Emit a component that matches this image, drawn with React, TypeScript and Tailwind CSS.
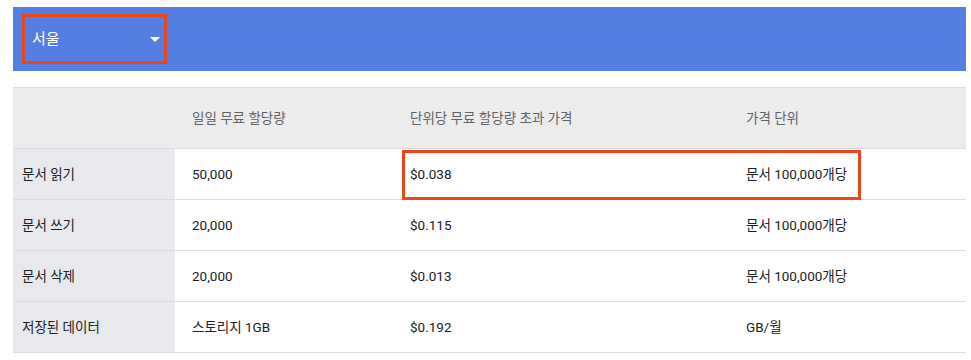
import React from "react";

const rows = [
  { name: "문서 읽기", free: "50,000", price: "$0.038", unit: "문서 100,000개당" },
  { name: "문서 쓰기", free: "20,000", price: "$0.115", unit: "문서 100,000개당" },
  { name: "문서 삭제", free: "20,000", price: "$0.013", unit: "문서 100,000개당" },
  { name: "저장된 데이터", free: "스토리지 1GB", price: "$0.192", unit: "GB/월" },
];

const App = () => {
  return (
    <div
      className="w-[971px] h-[360px] bg-white pt-[7px] pl-[13px] pr-[5px]"
      style={{ fontFamily: 'Roboto, "Noto Sans CJK KR", sans-serif' }}
    >
      {/* region picker bar */}
      <div className="h-[64px] bg-[#557ee3] pt-[7px] pl-[9px]">
        <div className="w-[145px] h-[50px] border-[3px] border-[#ea461e] flex items-center justify-between pl-[7px] pr-[4px]">
          <span className="text-white text-[15px]">서울</span>
          <span className="w-0 h-0 border-l-[5px] border-r-[5px] border-t-[5px] border-l-transparent border-r-transparent border-t-white" />
        </div>
      </div>

      {/* pricing table */}
      <div className="relative mt-[16px] border-t border-[#dcdcdc] text-[13.5px] text-[#202124]">
        <div className="flex h-[61px] bg-[#ececec] border-b border-[#dcdcdc] text-[#5f6368] items-center">
          <div className="w-[162px]" />
          <div className="w-[219px] pl-[17px]">일일 무료 할당량</div>
          <div className="w-[336px] pl-[16px]">단위당 무료 할당량 초과 가격</div>
          <div className="flex-1 pl-[16px]">가격 단위</div>
        </div>
        {rows.map((r) => (
          <div key={r.name} className="flex h-[51px] border-b border-[#dcdcdc]">
            <div className="w-[162px] bg-[#e8e9ed] pl-[9px] flex items-center">{r.name}</div>
            <div className="w-[219px] pl-[17px] flex items-center">{r.free}</div>
            <div className="w-[336px] pl-[16px] flex items-center">{r.price}</div>
            <div className="flex-1 pl-[16px] flex items-center">{r.unit}</div>
          </div>
        ))}
        {/* highlight annotation */}
        <div className="absolute left-[389px] top-[62px] w-[459px] h-[50px] border-[3px] border-[#ea461e]" />
      </div>
    </div>
  );
};

export default App;
